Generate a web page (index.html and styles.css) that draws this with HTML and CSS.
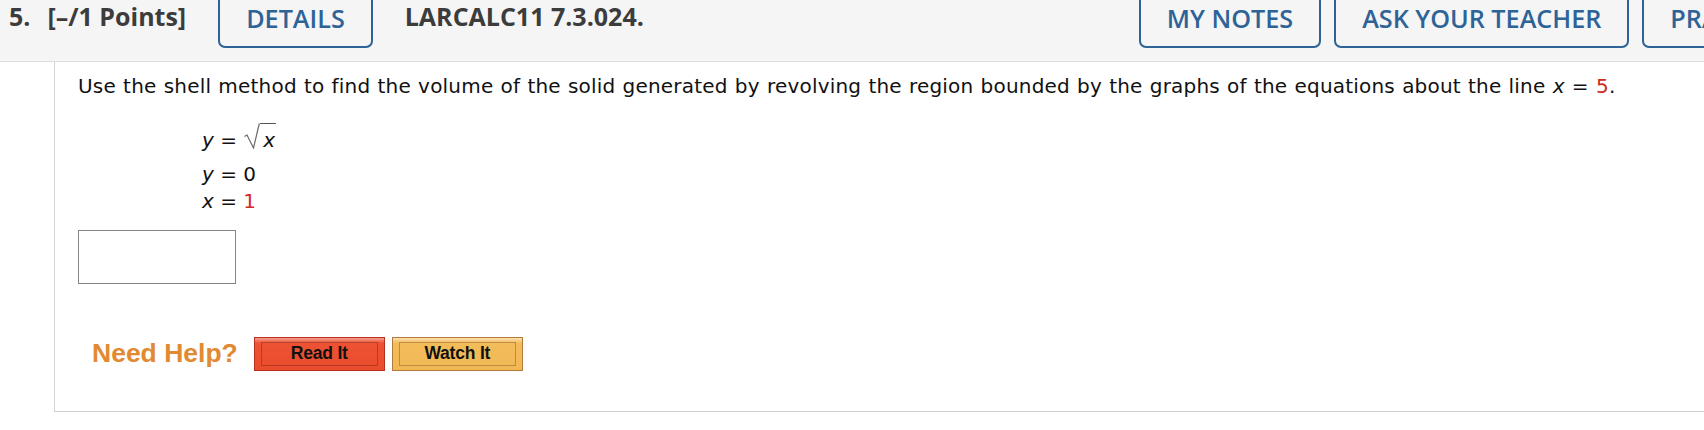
FILE: index.html
```html
<!DOCTYPE html>
<html>
<head>
<meta charset="utf-8">
<link rel="stylesheet" href="styles.css">
</head>
<body>
<div class="page">
  <header class="qhead">
    <span class="qnum">5.</span>
    <span class="qpts">[–/1 Points]</span>
    <a class="hbtn">DETAILS</a>
    <span class="qid">LARCALC11 7.3.024.</span>
    <div class="actions">
      <a class="hbtn">MY NOTES</a>
      <a class="hbtn">ASK YOUR TEACHER</a>
      <a class="hbtn">PRACTICE ANOTHER</a>
    </div>
  </header>
  <section class="qbody">
    <p class="prompt">Use the shell method to find the volume of the solid generated by revolving the region bounded by the graphs of the equations about the line <i>x</i> = <span class="red">5</span>.</p>
    <div class="eqs">
      <div class="eq eq-first"><i>y</i> = <span class="root"><svg class="rad" width="16" height="26" viewBox="0 0 16 26"><path d="M0.5 13.5 L3 12 L9.5 25 L15.3 0.5" fill="none" stroke="#6a6a6a" stroke-width="1.2" stroke-linejoin="miter"/></svg><span class="under"><i>x</i></span></span></div>
      <div class="eq"><i>y</i> = 0</div>
      <div class="eq"><i>x</i> = <span class="red">1</span></div>
    </div>
    <div class="answer"></div>
    <div class="help">
      <span class="need">Need Help?</span>
      <a class="hlp read"><span class="inner">Read It</span></a>
      <a class="hlp watch"><span class="inner">Watch It</span></a>
    </div>
  </section>
</div>
</body>
</html>
```

FILE: styles.css
```css
html, body {
  margin: 0;
  padding: 0;
  background: #ffffff;
  overflow: hidden;
}

.page {
  width: 1960px;
  margin-top: -12px;
}

.qhead {
  display: flex;
  align-items: flex-start;
  height: 73px;
  padding-left: 9px;
  background: #f5f5f5;
  border-bottom: 1px solid #dedede;
  font-family: "Open Sans", sans-serif;
  font-size: 25px;
  color: #3c3c3c;
  white-space: nowrap;
}

.qhead > * {
  flex-shrink: 0;
}

.qnum, .qpts, .qid {
  font-weight: 700;
  line-height: 57px;
}

.qpts {
  margin-left: 17px;
}

.hbtn {
  display: block;
  flex-shrink: 0;
  height: 56px;
  line-height: 56px;
  padding: 0 26px;
  border: 2px solid #2d6396;
  border-radius: 0 0 7px 7px;
  color: #2d6396;
  font-size: 25.2px;
  font-weight: 600;
  white-space: nowrap;
}

.qpts + .hbtn {
  margin-left: 32px;
}

.qid {
  margin-left: 32px;
}

.actions {
  display: flex;
  gap: 13px;
  margin-left: 495px;
}

.qbody {
  margin-left: 54px;
  border-left: 1px solid #d4d4d4;
  border-bottom: 1px solid #cfcfcf;
  padding: 12px 0 40px 23px;
  font-family: "DejaVu Sans", Verdana, sans-serif;
  font-size: 20px;
  color: #111;
}

.prompt {
  margin: 0;
  line-height: 24px;
  word-spacing: 0.6px;
  letter-spacing: 0.2px;
}

.red {
  color: #cf2a1e;
}

.eqs {
  margin-top: 24.5px;
  padding-left: 124px;
}

.eq {
  line-height: 27px;
}

.eq-first {
  margin-bottom: 7px;
}

.root {
  display: inline-block;
  margin-left: 1px;
}

.rad {
  vertical-align: -2px;
}

.under {
  display: inline-block;
  border-top: 1px solid #555;
  line-height: 20px;
  padding: 6px 1px 0 3px;
}

.answer {
  margin-top: 15px;
  width: 156px;
  height: 52px;
  border: 1px solid #858585;
  background: #fff;
}

.help {
  display: flex;
  align-items: center;
  margin-top: 53px;
  padding-left: 14px;
}

.need {
  font-family: "Liberation Sans", Arial, sans-serif;
  font-weight: 700;
  font-size: 26.5px;
  color: #e28a31;
  margin-right: 16px;
}

.hlp {
  display: flex;
  box-sizing: border-box;
  width: 131px;
  height: 34px;
  padding: 4px 6px 4px 6px;
  font-family: "Liberation Sans", Arial, sans-serif;
  font-weight: 700;
  font-size: 17.5px;
  color: #111;
}

.hlp .inner {
  flex: 1;
  display: flex;
  align-items: center;
  justify-content: center;
  border: 1px solid rgba(90, 20, 10, 0.35);
  letter-spacing: -0.2px;
}

.read {
  border: 1px solid #b8301e;
  background: linear-gradient(#f4a090 0, #ec5233 5px, #ea4d2d 100%);
}

.watch {
  margin-left: 7px;
  border: 1px solid #b27a3c;
  background: linear-gradient(#fbe0b0 0, #f3bc5a 5px, #f1b954 100%);
}

.watch .inner {
  border-color: rgba(110, 70, 20, 0.4);
}
```
